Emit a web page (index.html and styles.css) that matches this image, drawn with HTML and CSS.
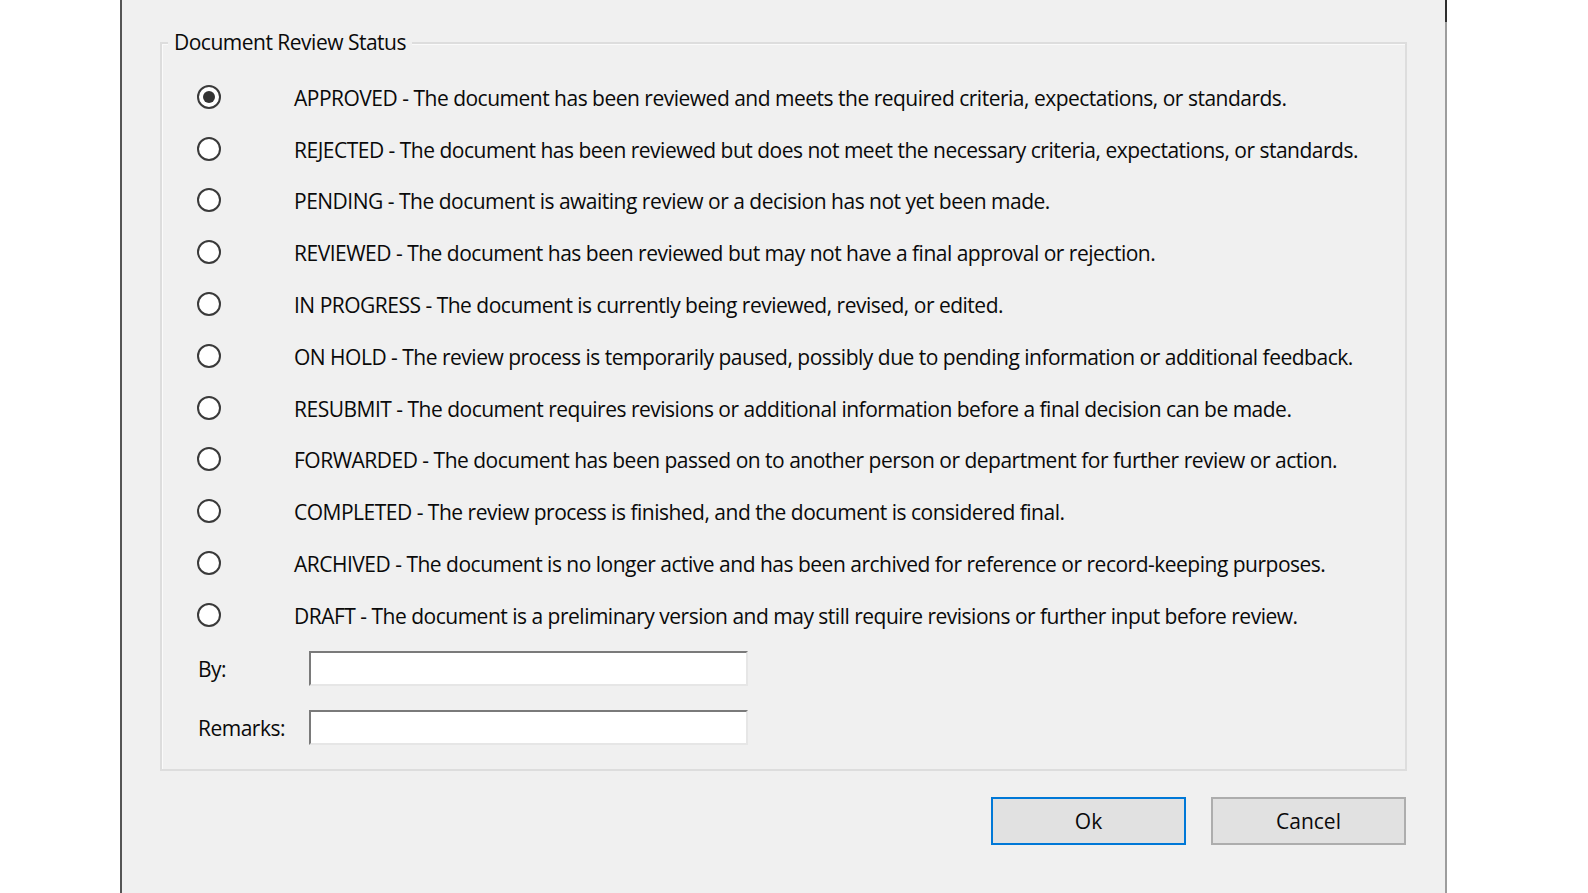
FILE: index.html
```html
<!DOCTYPE html>
<html>
<head>
<meta charset="utf-8">
<link rel="stylesheet" href="styles.css">
</head>
<body>
<div class="dialog">
  <div class="group">
    <div class="legend">Document Review Status</div>
    <div class="options">
      <label class="option"><span class="radio checked"></span><span class="text">APPROVED - The document has been reviewed and meets the required criteria, expectations, or standards.</span></label>
      <label class="option"><span class="radio"></span><span class="text">REJECTED - The document has been reviewed but does not meet the necessary criteria, expectations, or standards.</span></label>
      <label class="option"><span class="radio"></span><span class="text">PENDING - The document is awaiting review or a decision has not yet been made.</span></label>
      <label class="option"><span class="radio"></span><span class="text">REVIEWED - The document has been reviewed but may not have a final approval or rejection.</span></label>
      <label class="option"><span class="radio"></span><span class="text">IN PROGRESS - The document is currently being reviewed, revised, or edited.</span></label>
      <label class="option"><span class="radio"></span><span class="text">ON HOLD - The review process is temporarily paused, possibly due to pending information or additional feedback.</span></label>
      <label class="option"><span class="radio"></span><span class="text">RESUBMIT - The document requires revisions or additional information before a final decision can be made.</span></label>
      <label class="option"><span class="radio"></span><span class="text">FORWARDED - The document has been passed on to another person or department for further review or action.</span></label>
      <label class="option"><span class="radio"></span><span class="text">COMPLETED - The review process is finished, and the document is considered final.</span></label>
      <label class="option"><span class="radio"></span><span class="text">ARCHIVED - The document is no longer active and has been archived for reference or record-keeping purposes.</span></label>
      <label class="option"><span class="radio"></span><span class="text">DRAFT - The document is a preliminary version and may still require revisions or further input before review.</span></label>
    </div>
    <div class="fields">
      <div class="field"><span class="flabel">By:</span><span class="input"></span></div>
      <div class="field"><span class="flabel">Remarks:</span><span class="input"></span></div>
    </div>
  </div>
  <div class="buttons">
    <div class="btn default">Ok</div>
    <div class="btn">Cancel</div>
  </div>
</div>
</body>
</html>
```
FILE: styles.css
```css
html, body {
  margin: 0;
  padding: 0;
  background: #ffffff;
}
body {
  font-family: "Open Sans", "Noto Sans", sans-serif;
  font-size: 21px;
  letter-spacing: -0.5px;
  color: #0a0a0a;
}
.dialog {
  box-sizing: border-box;
  margin-left: 120px;
  width: 1327px;
  height: 893px;
  background: #f0f0f0;
  border-left: 2px solid #555555;
  border-right: 2px solid #9d9d9d;
  padding-top: 42px;
  position: relative;
}
.dialog::after {
  content: "";
  position: absolute;
  right: -2px;
  top: 0;
  width: 2px;
  height: 22px;
  background: #2e2e2e;
}
.group {
  box-sizing: border-box;
  margin-left: 38px;
  width: 1247px;
  height: 729px;
  border: 2px solid #dddddd;
  box-shadow: inset 1px 1px 0 #fafafa;
  position: relative;
}
.legend {
  position: absolute;
  left: 6px;
  top: -16px;
  padding: 0 6px;
  background: #f0f0f0;
  line-height: 28px;
}
.options {
  display: flex;
  flex-direction: column;
  padding-top: 27px;
  padding-left: 35px;
}
.option {
  display: flex;
  align-items: center;
  height: 51.8px;
}
.radio {
  box-sizing: border-box;
  width: 24px;
  height: 24px;
  border: 2px solid #3a3a3a;
  border-radius: 50%;
  background: #fff;
  margin-right: 73px;
  display: flex;
  align-items: center;
  justify-content: center;
  flex: none;
}
.radio.checked::after {
  content: "";
  width: 12px;
  height: 12px;
  border-radius: 50%;
  background: #333;
}
.text {
  white-space: nowrap;
  line-height: 28px;
  padding-top: 2px;
}
.fields {
  display: flex;
  flex-direction: column;
  gap: 24px;
  padding-top: 10px;
  padding-left: 36px;
}
.field {
  display: flex;
  align-items: center;
  height: 35px;
}
.flabel {
  width: 111px;
  flex: none;
  padding-top: 2px;
}
.input {
  box-sizing: border-box;
  width: 439px;
  height: 35px;
  background: #fff;
  border-top: 2px solid #7a7a7a;
  border-left: 2px solid #7a7a7a;
  border-right: 2px solid #e6e6e6;
  border-bottom: 2px solid #e6e6e6;
}
.buttons {
  display: flex;
  justify-content: flex-end;
  gap: 25px;
  margin-top: 26px;
  padding-right: 39px;
}
.btn {
  box-sizing: border-box;
  width: 195px;
  height: 48px;
  background: #e1e1e1;
  border: 2px solid #adadad;
  display: flex;
  align-items: center;
  justify-content: center;
  letter-spacing: 0;
}
.btn.default {
  border-color: #0078d7;
}
```
